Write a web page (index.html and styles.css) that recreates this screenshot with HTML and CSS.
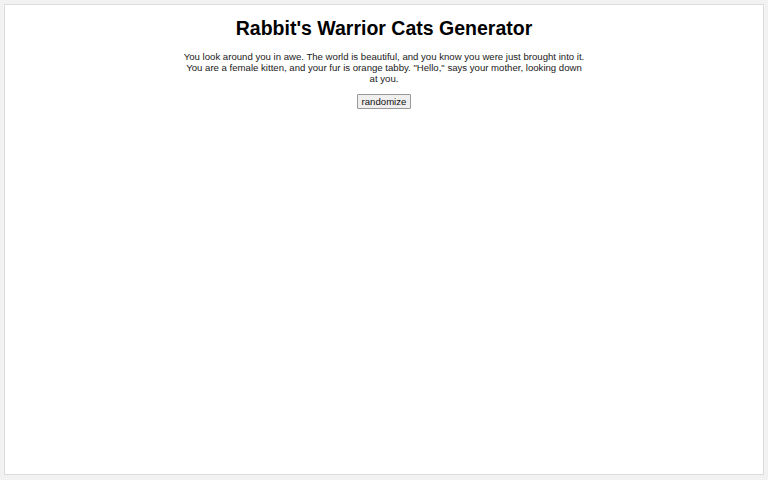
FILE: index.html
```html
<!DOCTYPE html>
<html lang="en">
<head>
  <meta charset="UTF-8" />
  <title>Rabbit's Warrior Cats Generator</title>
  <link rel="stylesheet" href="styles.css">
</head>
<body>
  <div class="page">
    <h1>Rabbit's Warrior Cats Generator</h1>
    <p id="story" class="story">You look around you in awe. The world is beautiful, and you know you were just brought into it. You are a female kitten, and your fur is orange tabby. "Hello," says your mother, looking down at you.</p>
    <button id="randomize" type="button">randomize</button>
  </div>
</body>
</html>
```

FILE: styles.css
```css
* { margin: 0; padding: 0; box-sizing: border-box; }
html, body { height: 100%; }

body {
  background: #f2f2f2;
  padding: 4px 4px 5px 4px;
  font-family: "Liberation Sans", Arial, sans-serif;
  color: #1a1a1a;
}

.page {
  height: 100%;
  background: #fff;
  border: 1px solid #dcdcdc;
  display: flex; flex-direction: column; align-items: center;
  text-align: center;
  padding-top: 12px;
}

h1 {
  font-size: 19.5px; line-height: 22px; font-weight: bold; color: #000;
  margin-bottom: 12px;
}

.story {
  max-width: 404px;
  font-size: 9.6px; line-height: 11px;
  margin-bottom: 10px;
}

button {
  font-family: "Liberation Sans", Arial, sans-serif;
  font-size: 9.6px; line-height: 11px;
  padding: 1px 4px;
  background: #efefef;
  border: 1px solid #999;
  border-radius: 1px;
  color: #111;
}
```
